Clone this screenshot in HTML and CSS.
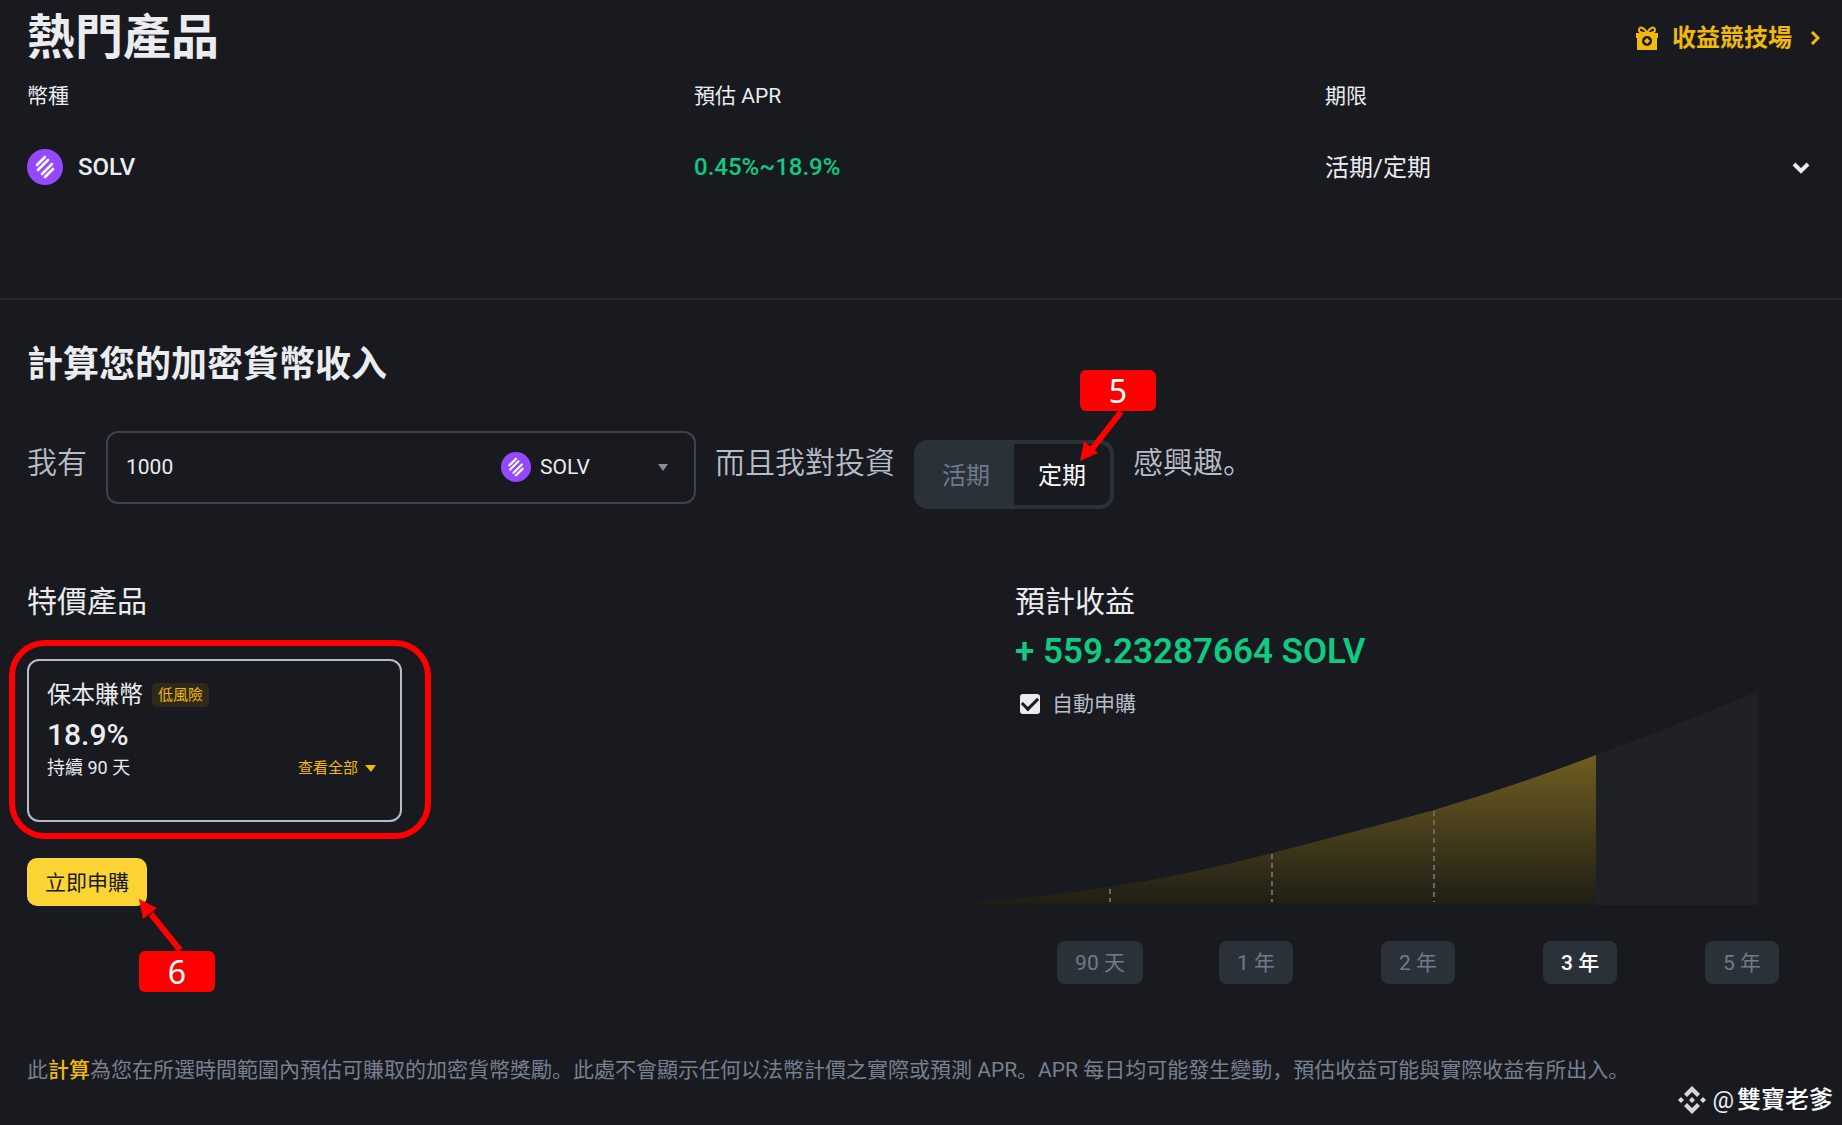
FILE: index.html
```
<!DOCTYPE html>
<html lang="zh">
<head>
	<meta charset="utf-8">
	<title>熱門產品</title>
	<link rel="stylesheet" href="styles.css">
</head>
<body>
	<svg class="defs" width="0" height="0">
		<symbol id="solv" viewBox="0 0 36 36">
			<circle cx="18" cy="18" r="18" fill="#9448ff"/>
			<path d="M10 16l8-8M11 21l10-10M15 25l10-10M18 28l8-8" stroke="#fff" stroke-width="2.6" stroke-linecap="round"/>
		</symbol>
	</svg>

	<section class="hot">
		<div class="hot-head">
			<h1>熱門產品</h1>
			<a class="arena" href="#">
				<svg width="22" height="24" viewBox="0 0 22 24">
					<path d="M11 7C8 1 3 0 3 4c0 3 4 3 8 3zM11 7c3-6 8-7 8-3 0 3-4 3-8 3z" fill="none" stroke="#f0b90b" stroke-width="2"/>
					<path d="M0 7h22v5h-1v12H1V12H0z" fill="#f0b90b"/>
					<circle cx="11" cy="15" r="5" fill="#181a20"/>
					<path d="M11 12l3 3-3 3-3-3z" fill="#f0b90b"/>
				</svg>
				<span>收益競技場</span>
				<svg width="10" height="14" viewBox="0 0 10 14"><path d="M2 1l6 6-6 6" fill="none" stroke="#f0b90b" stroke-width="3"/></svg>
			</a>
		</div>
		<table class="products">
			<thead>
				<tr><th class="coin">幣種</th><th class="apr">預估 APR</th><th>期限</th><th></th></tr>
			</thead>
			<tbody>
				<tr>
					<td><span class="coin-name"><svg width="36" height="36"><use href="#solv"/></svg>SOLV</span></td>
					<td class="rate">0.45%~18.9%</td>
					<td class="term">活期/定期</td>
					<td class="more">
						<button aria-label="展開"><svg width="18" height="12" viewBox="0 0 18 12"><path d="M2 2l7 7 7-7" fill="none" stroke="#eaecef" stroke-width="4"/></svg></button>
					</td>
				</tr>
			</tbody>
		</table>
	</section>

	<section class="calc">
		<h2>計算您的加密貨幣收入</h2>
		<form class="sentence">
			<label for="amount">我有</label>
			<div class="amount-box">
				<input type="text" id="amount" value="1000">
				<svg width="30" height="30"><use href="#solv"/></svg>
				<select aria-label="幣種"><option>SOLV</option></select>
				<svg class="caret" width="10" height="8" viewBox="0 0 10 8"><path d="M0 1h10L5 8z" fill="#848e9c"/></svg>
			</div>
			<span>而且我對投資</span>
			<div class="toggle">
				<button type="button">活期</button>
				<button type="button" class="active">定期</button>
				<div class="mark mark-5">
					<span>5</span>
					<svg width="44" height="52" viewBox="0 0 44 52"><path d="M41 1L12 38" stroke="#f00" stroke-width="6"/><path d="M0 50L4 30 18 42z" fill="#f00"/></svg>
				</div>
			</div>
			<span>感興趣。</span>
		</form>

		<div class="columns">
			<div class="offers">
				<h3>特價產品</h3>
				<div class="card">
					<div class="card-title">保本賺幣 <span class="tag">低風險</span></div>
					<div class="card-rate">18.9%</div>
					<div class="card-foot">
						<span>持續 90 天</span>
						<a href="#">查看全部<svg width="11" height="8" viewBox="0 0 11 8"><path d="M0 1h11L6 8z" fill="#f0b90b"/></svg></a>
					</div>
				</div>
				<div class="buy">
					<button>立即申購</button>
					<div class="mark mark-6">
						<svg width="44" height="52" viewBox="0 0 44 52"><path d="M41 51L12 15" stroke="#f00" stroke-width="6"/><path d="M0 0L4 20 18 9z" fill="#f00"/></svg>
						<span>6</span>
					</div>
				</div>
			</div>

			<div class="earnings">
				<h3>預計收益</h3>
				<div class="total">+ 559.23287664 SOLV</div>
				<label class="auto"><input type="checkbox" checked>自動申購</label>
				<svg class="chart" viewBox="0 0 810 214" preserveAspectRatio="none">
					<defs>
						<linearGradient id="gold" x1="0" y1="0" x2="0" y2="1">
							<stop offset="0" stop-color="#6f5e20"/>
							<stop offset="1" stop-color="#1f1d15"/>
						</linearGradient>
					</defs>
					<path d="M648 64Q730 34 810 0V214H648z" fill="#1f2126"/>
					<path d="M0 214Q80 208 162 196Q245 183 324 162Q410 140 486 119Q570 94 648 64V214z" fill="url(#gold)"/>
					<path d="M162 198V211M324 163V211M486 120V211" stroke="#6c6670" stroke-width="2" stroke-dasharray="5 4"/>
				</svg>
				<div class="periods">
					<button>90 天</button>
					<button>1 年</button>
					<button>2 年</button>
					<button class="active">3 年</button>
					<button>5 年</button>
				</div>
			</div>
		</div>

		<p class="note">此<a href="#">計算</a>為您在所選時間範圍內預估可賺取的加密貨幣獎勵。此處不會顯示任何以法幣計價之實際或預測 APR。APR 每日均可能發生變動，預估收益可能與實際收益有所出入。</p>
	</section>

	<footer>
		<svg width="28" height="28" viewBox="0 0 28 28" fill="#d6d7d9">
			<path d="M14 0l8 8-3 3-5-5-5 5-3-3zM14 28l8-8-3-3-5 5-5-5-3 3zM14 11l3 3-3 3-3-3zM3 11l3 3-3 3-3-3zM25 11l3 3-3 3-3-3z"/>
		</svg>
		<span>@<b>雙寶老爹</b></span>
	</footer>
</body>
</html>
```
FILE: styles.css
```
* {
	box-sizing: border-box;
}
body {
	margin: 0;
	background-color: #181a20;
	color: #eaecef;
	font-family: Roboto, "Noto Sans CJK SC", sans-serif;
	font-size: 21px;
}
h1, h2, h3, p {
	margin: 0;
}
button, input, select {
	font: inherit;
	color: inherit;
	background: none;
	border: none;
	padding: 0;
	margin: 0;
}
button {
	cursor: pointer;
}
a {
	color: #f0b90b;
	text-decoration: none;
}
.defs {
	position: absolute;
}

/* hot products */
.hot {
	padding: 10px 22px 90px 27px;
	border-bottom: 2px solid #25282f;
}
.hot-head {
	display: flex;
	justify-content: space-between;
	height: 56px;
}
h1 {
	font-size: 48px;
	line-height: 56px;
}
.arena {
	display: flex;
	align-items: center;
	gap: 14px;
	font-size: 24px;
	font-weight: 700;
	line-height: 56px;
}
.arena span {
	margin-right: 4px;
}
.products {
	width: 100%;
	border-collapse: collapse;
	table-layout: fixed;
}
.products th, .products td {
	padding: 0;
	text-align: left;
}
.products th {
	height: 60px;
	padding-bottom: 4px;
	font-weight: 400;
}
.products td {
	height: 82px;
}
.coin {
	width: 37.2%;
}
.apr {
	width: 35.2%;
}
.coin-name {
	display: flex;
	align-items: center;
	gap: 15px;
	font-size: 24px;
	font-weight: 500;
}
.products .rate {
	color: #0ecb81;
	font-size: 24px;
	font-weight: 500;
}
.products .term {
	padding-bottom: 4px;
	font-size: 24px;
}
.products .more {
	text-align: right;
	padding-right: 10px;
}

/* calculator */
.calc {
	padding: 41px 27px 0;
}
h2 {
	font-size: 36px;
	line-height: 48px;
}
h3 {
	font-size: 30px;
	font-weight: 400;
	line-height: 44px;
}
.sentence {
	display: flex;
	align-items: flex-start;
	gap: 19px;
	margin-top: 42px;
	color: #b7bdc6;
	font-size: 30px;
	font-weight: 350;
	line-height: 64px;
}
.amount-box {
	display: flex;
	align-items: center;
	flex: 0 1 590px;
	height: 73px;
	padding: 0 26px 2px 18px;
	border: 2px solid #3c434c;
	border-radius: 12px;
	color: #eaecef;
	font-size: 21px;
	font-weight: 400;
	line-height: 32px;
}
.amount-box input {
	flex: 1;
	min-width: 0;
}
.amount-box select {
	appearance: none;
	width: 118px;
	margin-left: 9px;
}
.toggle {
	position: relative;
	display: flex;
	margin-top: 9px;
	padding: 4px;
	border-radius: 14px;
	background-color: #2b3139;
}
.toggle button {
	height: 61px;
	padding: 0 24px 4px;
	color: #707a8a;
	font-size: 24px;
	font-weight: 400;
}
.toggle .active {
	background-color: #181a20;
	border-radius: 0 10px 10px 0;
	color: #fff;
}

/* numbered marks */
.mark {
	position: absolute;
	font-family: "Noto Sans", sans-serif;
	font-weight: 400;
}
.mark span {
	display: block;
	width: 76px;
	background-color: #f00;
	border-radius: 6px;
	color: #fff;
	font-size: 32px;
	line-height: 41px;
	text-align: center;
}
.mark svg {
	display: block;
}
.mark-5 {
	top: -70px;
	left: 166px;
}
.mark-6 {
	top: 41px;
	left: 112px;
}

.columns {
	display: grid;
	grid-template-columns: 17fr 16fr;
	margin-top: 71px;
}
.card {
	position: relative;
	width: 375px;
	height: 163px;
	margin-top: 35px;
	padding: 16px 24px 0 18px;
	border: 2px solid #b7bdc6;
	border-radius: 12px;
}
.card::after {
	content: "";
	position: absolute;
	inset: -21px -31px -19px -20px;
	border: 6px solid #f00;
	border-radius: 36px;
	pointer-events: none;
}
.card-title {
	display: flex;
	align-items: center;
	gap: 9px;
	font-size: 24px;
	line-height: 36px;
}
.tag {
	padding: 0 6px;
	border-radius: 5px;
	background-color: #2f2919;
	color: #f0b90b;
	font-size: 15px;
	line-height: 24px;
}
.card-rate {
	margin-top: 2px;
	font-size: 30px;
	font-weight: 500;
	line-height: 40px;
}
.card-foot {
	display: flex;
	justify-content: space-between;
	font-size: 18px;
	line-height: 26px;
}
.card-foot a {
	display: flex;
	align-items: center;
	gap: 7px;
	font-size: 15px;
}
.buy {
	position: relative;
	margin-top: 36px;
}
.buy button {
	height: 48px;
	padding: 0 18px 3px;
	border-radius: 10px;
	background-color: #fcd535;
	color: #181a20;
}

/* earnings */
.earnings {
	margin-right: 57px;
}
.earnings h3, .total, .auto {
	padding-left: 67px;
}
.total {
	margin-top: 6px;
	color: #0ecb81;
	font-size: 35px;
	font-weight: 600;
	line-height: 44px;
}
.auto {
	display: flex;
	align-items: center;
	gap: 12px;
	margin-top: 14px;
	color: #b7bdc6;
	line-height: 32px;
}
.auto input {
	appearance: none;
	display: grid;
	place-items: center;
	width: 20px;
	height: 20px;
	margin-left: 5px;
	border-radius: 3px;
	background-color: #eaecef;
}
.auto input:checked::before {
	content: "";
	width: 13px;
	height: 7px;
	margin-bottom: 4px;
	border: solid #181a20;
	border-width: 0 0 3px 3px;
	transform: rotate(-45deg);
}
.chart {
	display: block;
	width: 100%;
	height: 214px;
	margin-top: -29px;
}
.periods {
	display: grid;
	grid-template-columns: repeat(5, minmax(0, 1fr));
	justify-items: start;
	margin-top: 36px;
}
.periods button {
	height: 43px;
	margin-left: 109px;
	padding: 0 18px 3px;
	border-radius: 8px;
	background-color: #2b3139;
	color: #707a8a;
	white-space: nowrap;
}
.periods .active {
	color: #fff;
	font-weight: 500;
}
.note {
	margin-top: 70px;
	color: #76808f;
	line-height: 32px;
}
.note a {
	font-weight: 500;
}

footer {
	display: flex;
	justify-content: flex-end;
	align-items: center;
	gap: 6px;
	padding: 0 9px 10px 0;
	font-size: 24px;
	line-height: 28px;
}
footer b {
	margin-left: 3px;
	color: #fff;
	font-weight: 500;
}
```
